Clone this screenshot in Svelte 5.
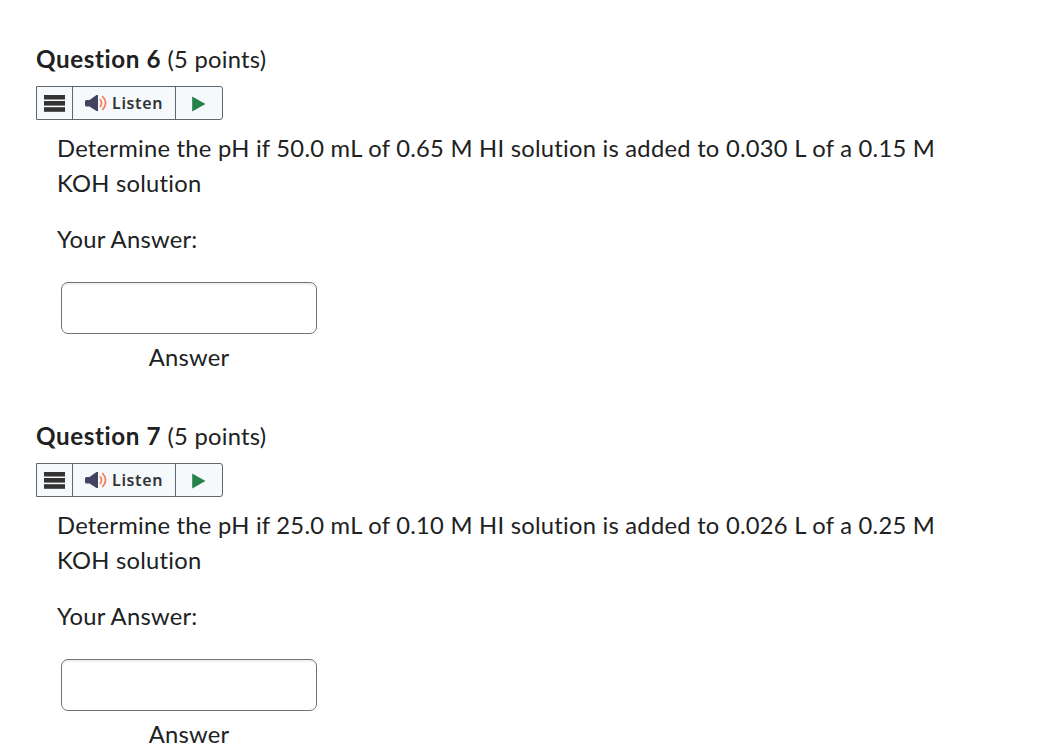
<script>
  let questions = [
    {
      number: 6,
      points: 5,
      text: "Determine the pH if 50.0 mL of 0.65 M HI solution is added to 0.030 L of a 0.15 M KOH solution",
      answer: ""
    },
    {
      number: 7,
      points: 5,
      text: "Determine the pH if 25.0 mL of 0.10 M HI solution is added to 0.026 L of a 0.25 M KOH solution",
      answer: ""
    }
  ];
</script>

<main>
  {#each questions as question (question.number)}
    <section class="question">
      <h2><strong>Question {question.number}</strong> ({question.points} points)</h2>
      <div class="toolbar">
        <button class="menu" aria-label="Menu">
          <svg width="21" height="17" viewBox="0 0 21 17" fill="#333">
            <rect width="21" height="4.5" />
            <rect y="6" width="21" height="4.6" />
            <rect y="12.2" width="21" height="4.6" />
          </svg>
        </button>
        <button class="listen">
          <svg width="22" height="16" viewBox="0 0 22 16">
            <path d="M0 6.5Q0 5 1.5 5H4.5L11.5 0H13V16H11.5L4.5 11.5H1.5Q0 11.5 0 10Z" fill="#45415f" />
            <path d="M15 4.3Q18 8 15 12M17.3 1.2Q24 8 17.3 15" fill="none" stroke="#f4805e" stroke-width="1.8" />
          </svg>
          <span>Listen</span>
        </button>
        <button class="play" aria-label="Play">
          <svg width="14" height="16" viewBox="0 0 14 16">
            <path d="M0.2 0.5L13.5 8L0.2 15.5Z" fill="#24824a" />
          </svg>
        </button>
      </div>
      <div class="body">
        <p>{question.text}</p>
        <p class="label">Your Answer:</p>
        <label class="field">
          <input type="text" bind:value={question.answer} />
          <span>Answer</span>
        </label>
      </div>
    </section>
  {/each}
</main>

<style>
  :global(body) {
    background: #fff;
  }

  main {
    padding: 42px 36px 0;
    font-family: Lato, sans-serif;
    font-size: 23.75px;
    line-height: 35px;
    letter-spacing: 0.25px;
    color: #202122;
  }

  .question {
    height: 377px;
  }

  .question:last-child {
    height: 328px;
  }

  h2 {
    margin: 0 0 9px;
    font-size: inherit;
    font-weight: 400;
  }

  h2 strong {
    font-size: 24.2px;
    line-height: 1;
    letter-spacing: 0.6px;
  }

  .toolbar {
    display: flex;
    width: 187px;
    height: 34px;
    box-sizing: border-box;
    border: 1px solid #60686f;
    border-radius: 0 3px 3px 0;
    background: #f5f9fc;
  }

  .toolbar button {
    display: flex;
    align-items: center;
    box-sizing: border-box;
    padding: 0;
    border: 0;
    background: none;
    font: 600 16px "Noto Sans", sans-serif;
    letter-spacing: 0.65px;
    color: #333;
  }

  .toolbar .menu {
    width: 36px;
    padding-left: 7px;
    border-right: 1px solid #60686f;
  }

  .toolbar .listen {
    width: 103px;
    padding-left: 12px;
    gap: 5px;
    border-right: 1px solid #60686f;
  }

  .toolbar .play {
    padding: 1px 0 0 16px;
  }

  .body {
    padding: 11px 60px 0 21px;
  }

  p {
    margin: 0;
  }

  .label {
    margin-top: 21px;
  }

  .field {
    display: flex;
    flex-direction: column;
    align-items: center;
    width: 256px;
    margin: 25px 0 0 4px;
  }

  input {
    width: 256px;
    height: 52px;
    margin: 0 0 6px;
    padding: 8px 16px;
    box-sizing: border-box;
    border: 1px solid #6e7376;
    border-radius: 7px;
    box-shadow: inset 0 3px 1px -1px #f0f1f3;
    font: inherit;
  }
</style>
